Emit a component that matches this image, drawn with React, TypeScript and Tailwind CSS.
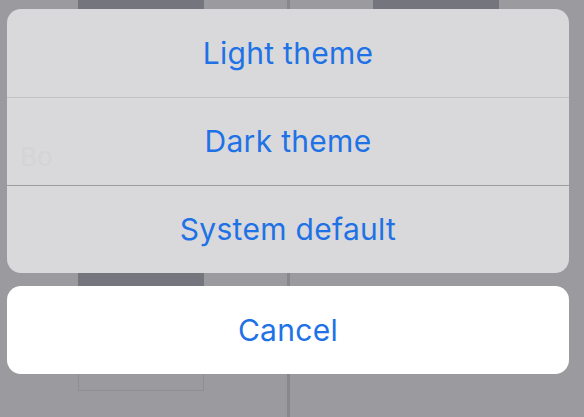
import React from 'react';

const options = ['Light theme', 'Dark theme', 'System default'];

function Backdrop() {
  // dimmed page behind the action sheet
  return (
    <div className="flex h-[417px] w-[584px] bg-[#9b9a9f]">
      <div className="w-[78px]" />
      <div className="flex w-[126px] flex-col">
        <div className="h-[12px] bg-[#74757d]" />
        <div className="h-[258px] border-x border-[#8f8e93]" />
        <div className="h-[20px] bg-[#74757d]" />
        <div className="h-[101px] border-x border-b border-[#8f8e93]" />
      </div>
      <div className="w-[83px]" />
      <div className="w-[3px] bg-[#88878c]" />
      <div className="w-[83px]" />
      <div className="flex w-[126px] flex-col">
        <div className="h-[12px] bg-[#74757d]" />
      </div>
      <div className="flex-1" />
    </div>
  );
}

export default function App() {
  return (
    <div className="relative h-[417px] w-[584px] overflow-hidden font-['Inter','Roboto',sans-serif]">
      <Backdrop />
      <div className="absolute left-[7px] top-[9px] flex w-[562px] flex-col gap-[13px]">
        <div className="relative overflow-hidden rounded-[14px] bg-[#d9d9db]">
          <span className="absolute left-[13px] top-[128px] text-[26px] text-[#d4d4d6]">Bo</span>
          {options.map((label, i) => (
            <button
              key={label}
              type="button"
              className={`relative flex h-[88px] w-full items-center justify-center text-[30px] tracking-[0.3px] text-[#1e72e6] ${
                i === 0 ? '' : i === 1 ? 'border-t border-[#c2c2c4]' : 'border-t border-[#9d9d9f]'
              }`}
            >
              {label}
            </button>
          ))}
        </div>
        <button
          type="button"
          className="flex h-[88px] w-full items-center justify-center rounded-[14px] bg-white text-[30px] tracking-[0.3px] text-[#1e72e6]"
        >
          Cancel
        </button>
      </div>
    </div>
  );
}
